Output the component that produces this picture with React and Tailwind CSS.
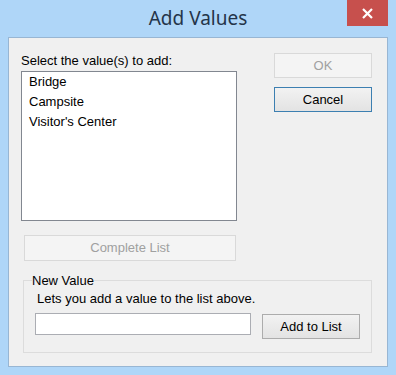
export default function App() {
  const items = ["Bridge", "Campsite", "Visitor's Center"];
  const btn =
    "h-[25px] w-[98px] border bg-gradient-to-b from-[#f2f2f2] to-[#e3e3e3] text-[13px] leading-none text-black";

  return (
    <div
      className="relative h-[375px] w-[396px] bg-[#afd6f8] pt-[37px] px-[8px]"
      style={{ fontFamily: '"Liberation Sans", Arial, sans-serif' }}
    >
      {/* title bar */}
      <div
        className="absolute left-0 top-0 flex h-[37px] w-full items-center justify-center text-[19px] text-[#243449]"
        style={{ fontFamily: '"Noto Sans", "Open Sans", sans-serif' }}
      >
        Add Values
      </div>
      <div className="absolute right-[8px] top-0 flex h-[26px] w-[41px] items-center justify-center bg-[#c7504d]">
        <svg width="11" height="11" viewBox="0 0 11 11">
          <path d="M1 1 L10 10 M10 1 L1 10" stroke="white" strokeWidth="2.2" />
        </svg>
      </div>

      {/* client area */}
      <div className="h-[330px] w-[380px] border border-[#98b6d3] bg-[#f0f0f0]">
        <div className="flex items-start">
          <div className="ml-[12px] mt-[15px]">
            <div className="text-[13px] leading-[15px] text-black">Select the value(s) to add:</div>
            <div className="mt-[3px] h-[150px] w-[216px] border border-[#828790] bg-white pl-[7px]">
              {items.map((it) => (
                <div key={it} className="text-[13px] leading-[20px] text-black">
                  {it}
                </div>
              ))}
            </div>
            <button
              disabled
              className="ml-[3px] mt-[14px] h-[26px] w-[212px] border border-[#d9d9d9] bg-[#f4f4f4] text-[13px] text-[#a0a0a0]"
            >
              Complete List
            </button>
          </div>
          <div className="ml-[37px] mt-[15px] flex flex-col gap-[9px]">
            <button disabled className="h-[25px] w-[98px] border border-[#d9d9d9] bg-[#f4f4f4] text-[13px] text-[#a0a0a0]">
              OK
            </button>
            <button className={`${btn} border-[#3c7fb1]`}>Cancel</button>
          </div>
        </div>

        <fieldset className="ml-[14px] mt-[12px] w-[349px] border border-[#dcdcdc] pb-[13px]">
          <legend className="ml-[8px] text-[13px] leading-[15px] text-black">New Value</legend>
          <div className="ml-[13px] mt-[3px] text-[13px] leading-[15px] text-black">
            Lets you add a value to the list above.
          </div>
          <div className="ml-[11px] mt-[7px] flex items-start gap-[11px]">
            <input className="h-[22px] w-[216px] border border-[#abadb3] bg-white outline-none" />
            <button className={`${btn} mt-[1px] h-[24px] border-[#acacac]`}>Add to List</button>
          </div>
        </fieldset>
      </div>
    </div>
  );
}
